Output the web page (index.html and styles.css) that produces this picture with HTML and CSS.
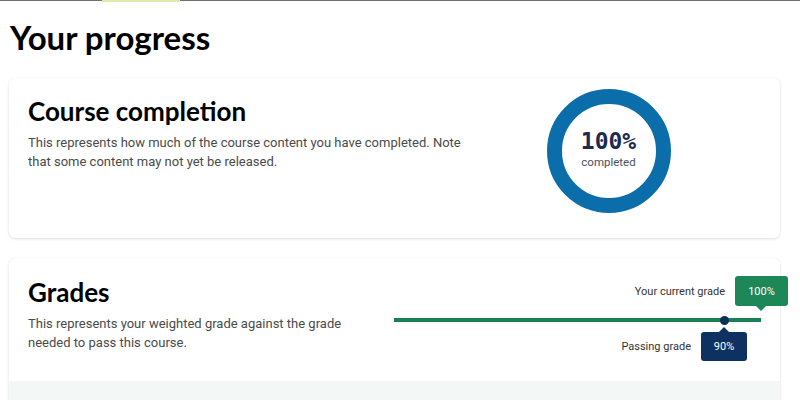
FILE: index.html
```html
<!DOCTYPE html>
<html lang="en">
<head>
  <meta charset="UTF-8" />
  <meta name="viewport" content="width=device-width, initial-scale=1" />
  <title>Progress</title>
  <link rel="stylesheet" href="styles.css">
</head>
<body>

  <div class="topbar"><span class="tab-mark"></span></div>

  <main class="progress-page">
    <h1>Your progress</h1>

    <section class="card completion">
      <div class="col-text">
        <h2>Course completion</h2>
        <p>This represents how much of the course content you have completed. Note that some content may not yet be released.</p>
      </div>
      <div class="col-chart">
        <div class="donut">
          <svg width="124" height="124" viewBox="0 0 124 124">
            <circle cx="62" cy="62" r="54.5" fill="none" stroke="#0b6eaa" stroke-width="15" />
          </svg>
          <div class="donut-label">
            <span class="donut-value">100%</span>
            <span class="donut-caption">completed</span>
          </div>
        </div>
      </div>
    </section>

    <section class="card grades">
      <div class="grades-body">
        <div class="col-text">
          <h2>Grades</h2>
          <p>This represents your weighted grade against the grade needed to pass this course.</p>
        </div>
        <div class="col-bar">
          <div class="grade-bar">
            <div class="marker current">
              <span class="marker-label">Your current grade</span>
              <span class="tip tip-green">100%</span>
            </div>
            <span class="pass-dot"></span>
            <div class="marker passing">
              <span class="marker-label">Passing grade</span>
              <span class="tip tip-navy">90%</span>
            </div>
          </div>
        </div>
      </div>
      <div class="grades-footer"></div>
    </section>
  </main>

</body>
</html>
```

FILE: styles.css
```css
body {
  margin: 0;
  background: #ffffff;
  color: #000000;
  font-family: Roboto, "Open Sans", Arial, sans-serif;
}

.topbar {
  height: 1px;
  background: #707070;
  display: flex;
}
.tab-mark {
  margin-left: 102px;
  width: 78px;
  height: 2px;
  background: #dcecab;
}

.progress-page {
  width: 771px;
  padding-left: 9px;
}

h1, h2 {
  font-family: Lato, "Open Sans", Arial, sans-serif;
  font-weight: 700;
}

h1 {
  font-size: 33px;
  margin: 14px 0 19px 1px;
  line-height: 44px;
}

.card {
  background: #ffffff;
  border-radius: 6px;
  box-shadow: 0 1px 3px rgba(0, 0, 0, 0.12), 0 0 1px rgba(0, 0, 0, 0.08);
  margin-bottom: 20px;
}

h2 {
  font-size: 26px;
  margin: 0 0 6px;
  line-height: 34px;
}

.col-text p {
  font-size: 13px;
  line-height: 18.5px;
  color: #4a4a4a;
  margin: 0;
}

/* course completion */
.completion {
  display: flex;
  height: 160px;
  box-sizing: border-box;
  padding: 0 19px;
}
.completion .col-text {
  width: 440px;
  padding-top: 16px;
}
.completion .col-chart {
  flex: 1;
  display: flex;
  justify-content: center;
  padding-top: 11px;
  padding-right: 12px;
}
.donut {
  width: 124px;
  height: 124px;
  position: relative;
}
.donut svg {
  display: block;
}
.donut-label {
  position: absolute;
  inset: 0;
  display: flex;
  flex-direction: column;
  align-items: center;
  justify-content: center;
}
.donut-value {
  font-family: "DejaVu Sans Mono", "Liberation Mono", monospace;
  font-weight: 700;
  font-size: 23px;
  line-height: 26px;
  color: #1f2b4d;
  margin-top: -4px;
}
.donut-caption {
  font-size: 11.5px;
  line-height: 16px;
  color: #4a4f5c;
}

/* grades */
.grades-body {
  display: flex;
  padding: 0 19px;
  height: 123px;
}
.grades .col-text {
  width: 345px;
  padding-top: 17px;
}
.col-bar {
  flex: 1;
  padding-left: 22px;
  padding-top: 60px;
}
.grade-bar {
  position: relative;
  width: 367px;
  height: 4px;
  background: #1b7f55;
}
.pass-dot {
  position: absolute;
  left: 90%;
  top: -2.5px;
  width: 9px;
  height: 9px;
  margin-left: -4.5px;
  border-radius: 50%;
  background: #0d2f5a;
}
.marker {
  position: absolute;
  display: flex;
  align-items: center;
  gap: 10px;
}
.marker-label {
  font-size: 11px;
  color: #333333;
  white-space: nowrap;
}
.tip {
  position: relative;
  font-size: 11px;
  color: #ffffff;
  border-radius: 3px;
  display: flex;
  align-items: center;
  justify-content: center;
}
.tip::after {
  content: "";
  position: absolute;
  border: 5px solid transparent;
}
.current {
  right: -27px;
  bottom: 16px;
}
.tip-green {
  background: #1d8757;
  width: 53px;
  height: 30px;
}
.tip-green::after {
  top: 100%;
  left: 21px;
  border-top-color: #1d8757;
}
.passing {
  right: 14px;
  top: 14px;
}
.tip-navy {
  background: #0d3160;
  width: 46px;
  height: 29px;
}
.tip-navy::after {
  bottom: 100%;
  left: 18px;
  border-bottom-color: #0d3160;
}
.grades-footer {
  height: 40px;
  background: #f3f7f6;
}
```
